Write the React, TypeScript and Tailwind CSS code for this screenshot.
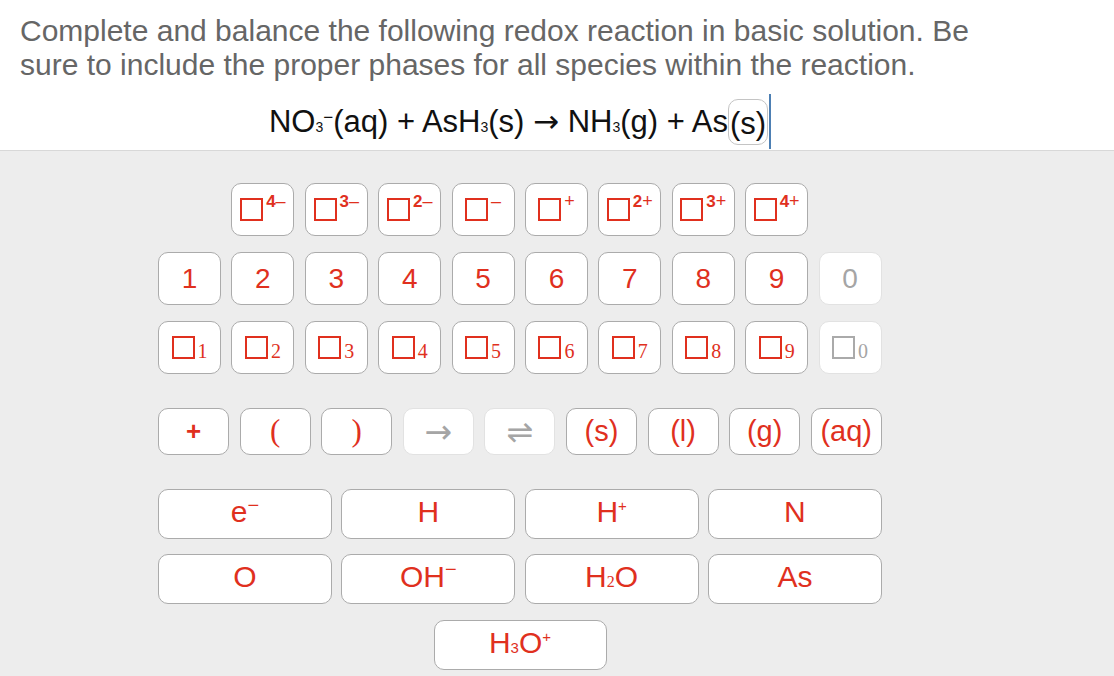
import type { ReactNode } from 'react';

const RED = 'text-[#e0301e]';

function Key({
  children,
  disabled = false,
  className = '',
}: {
  children: ReactNode;
  disabled?: boolean;
  className?: string;
}) {
  return (
    <button
      className={`w-full flex items-center justify-center bg-white rounded-[10px] border ${
        disabled ? 'border-[#e2e2e2] text-[#a5a5a5]' : `border-[#ababab] ${RED}`
      } ${className}`}
    >
      <span>{children}</span>
    </button>
  );
}

function Box({ gray = false }: { gray?: boolean }) {
  return (
    <span
      className={`block w-[23px] h-[23px] border-2 ${gray ? 'border-[#aaaaaa]' : 'border-[#e0301e]'}`}
    />
  );
}

// charge keys: □⁴⁻ ... □⁴⁺
function ChargeKey({ n, sign }: { n: string; sign: string }) {
  return (
    <Key className="h-[53px]">
      <span className="flex items-start">
        <Box />
        <span className="flex items-center -mt-[6px] ml-[3px] leading-none">
          <span className="text-[17px] font-bold">{n}</span>
          <span className="text-[18px]">{sign}</span>
        </span>
      </span>
    </Key>
  );
}

function SubKey({ n, disabled = false }: { n: string; disabled?: boolean }) {
  return (
    <Key className="h-[53px]" disabled={disabled}>
      <span className="flex items-end">
        <Box gray={disabled} />
        <span className="font-['Liberation_Serif',serif] text-[20px] leading-none -mb-[2px] ml-[3px]">
          {n}
        </span>
      </span>
    </Key>
  );
}

export default function App() {
  const charges = [
    ['4', '–'],
    ['3', '–'],
    ['2', '–'],
    ['', '–'],
    ['', '+'],
    ['2', '+'],
    ['3', '+'],
    ['4', '+'],
  ];
  const digits = ['1', '2', '3', '4', '5', '6', '7', '8', '9'];

  return (
    <div className="w-[1114px] h-[676px] overflow-hidden bg-[#ededed] font-['Liberation_Sans',Arial,sans-serif]">
      {/* question header */}
      <div className="h-[151px] bg-white border-b border-[#d8d8d8]">
        <p className="pl-[20px] pt-[14px] text-[30px] leading-[34px] text-[#666666]">
          Complete and balance the following redox reaction in basic solution. Be
          <br />
          sure to include the proper phases for all species within the reaction.
        </p>
        <div className="w-[1040px] flex justify-center mt-[12px]">
          <div className="flex items-center text-[31px] text-[#111111] leading-[34px]">
            <span className="pt-[4px]">
              NO<span className="text-[14px]">3</span>
              <span className="relative -top-[9px] text-[17px]">−</span>(aq) + AsH
              <span className="text-[14px]">3</span>(s){' '}
              <span className="font-['DejaVu_Sans',sans-serif]">→</span> NH
              <span className="text-[14px]">3</span>(g) + As
            </span>
            <span className="inline-flex items-center pt-[4px] h-[46px] px-[1px] border border-[#c4c4c4] rounded-[10px]">
              (s)
            </span>
            <span className="block w-[2px] h-[55px] bg-[#4d7fb3] ml-[1px]" />
          </div>
        </div>
      </div>

      {/* keypad */}
      <div className="w-[1040px] flex justify-center pt-[32px]">
        <div className="w-[724px] flex flex-col">
          <div className="grid grid-cols-[repeat(10,63px)] gap-x-[10.4px] gap-y-[16px]">
            {charges.map(([n, s], i) => (
              <div key={i} className={i === 0 ? 'col-start-2' : ''}>
                <ChargeKey n={n} sign={s} />
              </div>
            ))}
            <div />
            {digits.map((d) => (
              <Key key={d} className="h-[53px] text-[28px]">
                {d}
              </Key>
            ))}
            <Key disabled className="h-[53px] text-[28px]">
              0
            </Key>
            {digits.map((d) => (
              <SubKey key={'s' + d} n={d} />
            ))}
            <SubKey n="0" disabled />
          </div>

          <div className="grid grid-cols-[repeat(9,71px)] gap-x-[10.6px] mt-[34px]">
            <Key className="h-[47px] text-[26px] font-bold">+</Key>
            <Key className="h-[47px] text-[31px] font-['Liberation_Serif',serif]">(</Key>
            <Key className="h-[47px] text-[31px] font-['Liberation_Serif',serif]">)</Key>
            <Key disabled className="h-[47px] text-[33px] font-['DejaVu_Sans',sans-serif]">
              →
            </Key>
            <Key disabled className="h-[47px] text-[32px] font-['DejaVu_Sans',sans-serif]">
              ⇌
            </Key>
            <Key className="h-[47px] text-[29px]">(s)</Key>
            <Key className="h-[47px] text-[29px]">(l)</Key>
            <Key className="h-[47px] text-[29px]">(g)</Key>
            <Key className="h-[47px] text-[29px]">(aq)</Key>
          </div>

          <div className="grid grid-cols-[repeat(4,174px)] gap-x-[9.3px] gap-y-[15px] mt-[34px] text-[30px]">
            <Key className="h-[50px] pb-[6px]">
              e<span className="relative -top-[10px] text-[20px]">−</span>
            </Key>
            <Key className="h-[50px] pb-[6px]">H</Key>
            <Key className="h-[50px] pb-[6px]">
              H<span className="relative -top-[11px] text-[15px]">+</span>
            </Key>
            <Key className="h-[50px] pb-[6px]">N</Key>
            <Key className="h-[50px] pb-[6px]">O</Key>
            <Key className="h-[50px] pb-[6px]">
              OH<span className="relative -top-[11px] text-[20px]">−</span>
            </Key>
            <Key className="h-[50px] pb-[6px]">
              H<span className="font-['Liberation_Serif',serif] text-[16px]">2</span>O
            </Key>
            <Key className="h-[50px] pb-[6px]">As</Key>
          </div>

          <div className="flex justify-center mt-[16px] text-[30px]">
            <div className="w-[173px]">
              <Key className="h-[50px] pb-[6px]">
                H<span className="text-[15px]">3</span>O
                <span className="relative -top-[11px] text-[15px]">+</span>
              </Key>
            </div>
          </div>
        </div>
      </div>
    </div>
  );
}
